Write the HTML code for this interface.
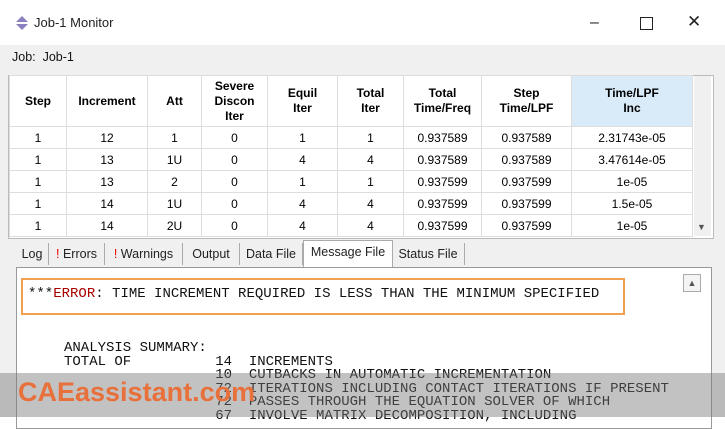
<!DOCTYPE html><html><head><style>
body{margin:0;width:725px;height:417px;overflow:hidden;background:#fff;font-family:"Liberation Sans",sans-serif;position:relative}
.a{position:absolute}
table{border-collapse:collapse;font-size:12px}
td,th{border:1px solid #ddd;text-align:center;padding:0}
th{font-weight:bold;height:50px;font-size:12px;line-height:15px}
td{height:21px}
.mono{font-family:"Liberation Mono",monospace;font-size:14px;white-space:pre;line-height:13.6px;color:#111}
.tab{position:absolute;top:243px;height:22px;line-height:22px;font-size:12.5px;border-right:1px solid #aaa;text-align:center;color:#222}
</style></head><body>
<div class="a" style="left:0;top:0;width:725px;height:45px;background:#fff"></div>
<div class="a" style="left:0;top:45px;width:725px;height:372px;background:#f0f0f0"></div>
<svg class="a" style="left:14px;top:15px" width="16" height="16"><path d="M8 1L14 7H2Z" fill="#8a7fc0"/><path d="M8 15L14 9H2Z" fill="#8a7fc0"/></svg>
<div class="a" style="left:34px;top:15px;font-size:13px;color:#222">Job-1 Monitor</div>
<div class="a" style="left:590px;top:14px;font-size:16px;color:#222">–</div>
<div class="a" style="left:640px;top:17px;width:11px;height:11px;border:1px solid #222"></div>
<div class="a" style="left:687px;top:12px;font-size:17px;color:#222">✕</div>
<div class="a" style="left:12px;top:50px;font-size:12.5px;color:#111">Job:&nbsp; Job-1</div>
<div class="a" style="left:8px;top:75px;width:704px;height:162px;background:#fff;border:1px solid #bbb"></div>
<table class="a" style="left:9px;top:75px;width:684px">
<tr><th style="width:56px">Step</th><th style="width:80px">Increment</th><th style="width:53px">Att</th><th style="width:65px">Severe<br>Discon<br>Iter</th><th style="width:69px">Equil<br>Iter</th><th style="width:65px">Total<br>Iter</th><th style="width:77px">Total<br>Time/Freq</th><th style="width:89px">Step<br>Time/LPF</th><th style="background:#d9ebf9">Time/LPF<br>Inc</th></tr>
<tr><td>1</td><td>12</td><td>1</td><td>0</td><td>1</td><td>1</td><td>0.937589</td><td>0.937589</td><td>2.31743e-05</td></tr>
<tr><td>1</td><td>13</td><td>1U</td><td>0</td><td>4</td><td>4</td><td>0.937589</td><td>0.937589</td><td>3.47614e-05</td></tr>
<tr><td>1</td><td>13</td><td>2</td><td>0</td><td>1</td><td>1</td><td>0.937599</td><td>0.937599</td><td>1e-05</td></tr>
<tr><td>1</td><td>14</td><td>1U</td><td>0</td><td>4</td><td>4</td><td>0.937599</td><td>0.937599</td><td>1.5e-05</td></tr>
<tr><td>1</td><td>14</td><td>2U</td><td>0</td><td>4</td><td>4</td><td>0.937599</td><td>0.937599</td><td>1e-05</td></tr>
</table>
<div class="a" style="left:694px;top:76px;width:17px;height:160px;background:#f0f0f0"></div>
<div class="a" style="left:697px;top:222px;font-size:9px;color:#555">▼</div>
<div class="tab" style="left:16px;width:32px">Log</div>
<div class="tab" style="left:49px;width:55px"><span style="color:#e00">!</span> Errors</div>
<div class="tab" style="left:105px;width:77px"><span style="color:#e00">!</span> Warnings</div>
<div class="tab" style="left:183px;width:56px">Output</div>
<div class="tab" style="left:240px;width:62px">Data File</div>
<div class="tab" style="left:303px;width:88px;top:240px;height:26px;background:#fff;border-left:1px solid #aaa;border-top:1px solid #aaa">Message File</div>
<div class="tab" style="left:392px;width:72px">Status File</div>
<div class="a" style="left:16px;top:267px;width:694px;height:160px;background:#fff;border:1px solid #999"></div>
<div class="a" style="left:683px;top:274px;width:16px;height:16px;border:1px solid #aaa;background:#f4f4f4;font-size:9px;text-align:center;line-height:16px;color:#555">▲</div>
<div class="a" style="left:21px;top:278px;width:600px;height:33px;border:2px solid #f0a050"></div>
<div class="a mono" style="left:28px;top:288px">***<span style="color:#a00">ERROR</span>: TIME INCREMENT REQUIRED IS LESS THAN THE MINIMUM SPECIFIED</div>
<div class="a mono" style="left:64px;top:342px">ANALYSIS SUMMARY:
TOTAL OF          14  INCREMENTS
                  10  CUTBACKS IN AUTOMATIC INCREMENTATION
                  72  ITERATIONS INCLUDING CONTACT ITERATIONS IF PRESENT
                  72  PASSES THROUGH THE EQUATION SOLVER OF WHICH
                  67  INVOLVE MATRIX DECOMPOSITION, INCLUDING</div>
<div class="a" style="left:0;top:373px;width:725px;height:44px;background:rgba(120,120,120,0.45)"></div>
<div class="a" style="left:18px;top:377px;font-size:27px;font-weight:bold;color:#e8703a">CAEassistant.com</div>
</body></html>
